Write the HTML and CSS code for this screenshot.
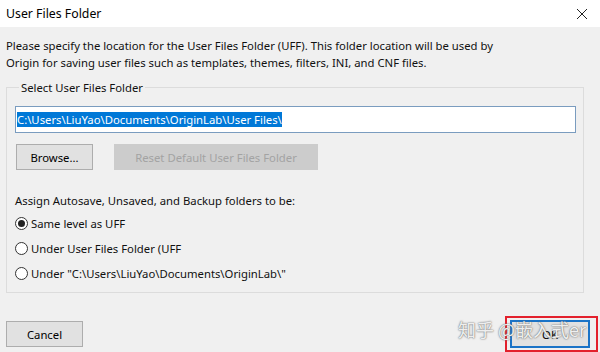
FILE: index.html
```html
<!DOCTYPE html>
<html lang="en">
<head>
  <meta charset="UTF-8">
  <title>User Files Folder</title>
  <link rel="stylesheet" href="styles.css">
</head>
<body>
  <div class="dialog">
    <div class="titlebar">
      <span class="title">User Files Folder</span>
      <svg class="close" width="12" height="12" viewBox="0 0 12 12">
        <path d="M1 1 L11 11 M11 1 L1 11" stroke="#222" stroke-width="1" fill="none"/>
      </svg>
    </div>
    <div class="content">
      <p class="intro">Please specify the location for the User Files Folder (UFF). This folder location will be used by<br>Origin for saving user files such as templates, themes, filters, INI, and CNF files.</p>

      <fieldset class="group">
        <legend>Select User Files Folder</legend>
        <div class="path-box"><span class="selected">C:\Users\LiuYao\Documents\OriginLab\User Files\</span></div>
        <div class="buttons">
          <button class="btn browse">Browse...</button>
          <button class="btn reset" disabled>Reset Default User Files Folder</button>
        </div>
        <p class="assign">Assign Autosave, Unsaved, and Backup folders to be:</p>
        <label class="radio"><input type="radio" name="loc" checked> Same level as UFF</label>
        <label class="radio"><input type="radio" name="loc"> Under User Files Folder (UFF</label>
        <label class="radio"><input type="radio" name="loc"> Under "C:\Users\LiuYao\Documents\OriginLab\"</label>
      </fieldset>

      <div class="footer">
        <button class="btn cancel">Cancel</button>
        <span class="highlight"><button class="btn ok">OK</button></span>
        <span class="watermark">知乎 @嵌入式er</span>
      </div>
    </div>
  </div>
</body>
</html>
```

FILE: styles.css
```css
* {
  box-sizing: border-box;
}

body {
  margin: 0;
  font-family: "Segoe UI", "Noto Sans", "Noto Sans CJK SC", sans-serif;
  font-size: 11.3px;
  color: #111;
}

.dialog {
  width: 600px;
  height: 352px;
  background: #f0f0f0;
  overflow: hidden;
}

.titlebar {
  height: 27px;
  background: #fff;
  display: flex;
  align-items: center;
  justify-content: space-between;
  padding: 0 12px 0 6px;
}
.title {
  font-size: 12.3px;
  color: #000;
}

.content {
  padding: 10px 16px 0 6px;
}

.intro {
  margin: 0;
  line-height: 17px;
}

.group {
  margin: 8px 0 0 0;
  padding: 10px 7px 10px 8px;
  border: 1px solid #dcdcdc;
  min-width: 0;
}
.group legend {
  padding: 0 2px;
  margin-left: 4px;
  line-height: 17px;
}

.path-box {
  height: 27px;
  background: #fff;
  border: 1px solid #7a9cbf;
  padding: 4px 1px;
  line-height: 17px;
}
.selected {
  background: #0078d7;
  color: #fff;
}

.buttons {
  display: flex;
  gap: 21px;
  margin-top: 11px;
}

.btn {
  font: inherit;
  height: 26px;
  background: #e1e1e1;
  border: 1px solid #adadad;
  color: #000;
  padding: 0;
}
.browse {
  width: 77px;
  margin-left: 1px;
}
.reset {
  width: 204px;
  background: #cccccc;
  border-color: #cccccc;
  color: #a3a3a3;
}

.assign {
  margin: 22px 0 0 0;
  line-height: 17px;
}

.radio {
  display: flex;
  align-items: center;
  gap: 3px;
  height: 17px;
  margin-top: 8px;
}
.assign + .radio {
  margin-top: 6px;
}
.radio input {
  appearance: none;
  width: 13px;
  height: 13px;
  margin: 0;
  border: 1px solid #333;
  border-radius: 50%;
  background: #fff;
  display: grid;
  place-content: center;
}
.radio input:checked::before {
  content: "";
  width: 7px;
  height: 7px;
  border-radius: 50%;
  background: #222;
}

.footer {
  position: relative;
  display: flex;
  justify-content: space-between;
  align-items: flex-end;
  margin-top: 23px;
  margin-right: -14px;
}
.cancel {
  width: 77px;
  margin-bottom: 5px;
}
.highlight {
  border: 2px solid #e3202c;
  padding: 2px 6px 2px 3px;
}
.ok {
  display: block;
  width: 80px;
  height: 28px;
  border: 2px solid #1a73c7;
}

.watermark {
  position: absolute;
  left: 452px;
  top: 0;
  font-family: "Noto Sans CJK SC", sans-serif;
  font-size: 18px;
  color: rgba(255, 255, 255, 0.9);
  text-shadow: 0 0 2px #777, 0 0 1px #777;
}
```
